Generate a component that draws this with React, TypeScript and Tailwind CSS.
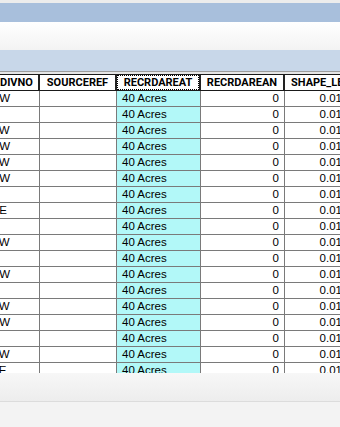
const divs = ['NW', '', 'SW', 'NW', 'SW', 'NW', '', 'NE', '', 'SW', '', 'NW', '', 'SW', 'NW', '', 'SW', 'SE']

function HeaderRow() {
  return (
    <div className="flex h-[17px] border-y border-[#1a1a1a] bg-white font-['Roboto',sans-serif] text-[11px] font-bold leading-none text-black">
      <div className="flex w-[40px] shrink-0 items-center overflow-hidden border-r-2 border-[#222]">
        <span className="whitespace-nowrap">DIVNO</span>
      </div>
      <div className="flex w-[77px] shrink-0 items-center justify-center border-r-2 border-[#222]">SOURCEREF</div>
      <div className="flex w-[84px] shrink-0 items-center justify-center border-r-2 border-[#222]">
        <span className="flex h-full w-full items-center justify-center border border-dotted border-black">RECRDAREAT</span>
      </div>
      <div className="flex w-[84px] shrink-0 items-center justify-center border-r-2 border-[#222]">RECRDAREAN</div>
      <div className="flex w-[90px] shrink-0 items-center overflow-hidden whitespace-nowrap pl-[6px]">SHAPE_LEN</div>
    </div>
  )
}

function DataRow({ div }: { div: string }) {
  return (
    <div className="flex h-[16px] border-b border-[#7a7a7a] font-['Liberation_Sans',Arial,sans-serif] text-[11.5px] leading-none text-black">
      <div className="flex w-[40px] shrink-0 items-center overflow-hidden border-r border-[#7a7a7a]">
        <span className="-ml-[9px] whitespace-nowrap">{div}</span>
      </div>
      <div className="w-[77px] shrink-0 border-r border-[#7a7a7a]" />
      <div className="flex w-[84px] shrink-0 items-center border-r border-[#7a7a7a] bg-[#b2f8f8] pl-[5px]">40 Acres</div>
      <div className="flex w-[84px] shrink-0 items-center justify-end border-r border-[#7a7a7a] pr-[5px]">0</div>
      <div className="flex w-[90px] shrink-0 items-center justify-end pr-[33px]">0.01</div>
    </div>
  )
}

export default function App() {
  return (
    <div className="flex h-[427px] w-[340px] flex-col overflow-hidden bg-[#f2f2f2]">
      <div className="h-[3px] bg-[#ececec]" />
      <div className="h-[19px] bg-[#a8bfdc]" />
      <div className="h-[28px] bg-gradient-to-b from-white to-[#f3f3f3]" />
      <div className="h-[21px] bg-[#c8d7e9]" />
      <div className="h-px bg-[#9c9c9c]" />
      <div className="h-[2px] bg-[#e6e6e6]" />

      <div className="h-[299px] overflow-hidden bg-white">
        <HeaderRow />
        {divs.map((d, i) => (
          <DataRow key={i} div={d} />
        ))}
      </div>

      <div className="h-[28px] bg-gradient-to-b from-[#f7f7f7] to-[#ededed]" />
      <div className="h-px bg-[#dcdcdc]" />
      <div className="flex-1 bg-[#f3f3f3]" />
    </div>
  )
}
